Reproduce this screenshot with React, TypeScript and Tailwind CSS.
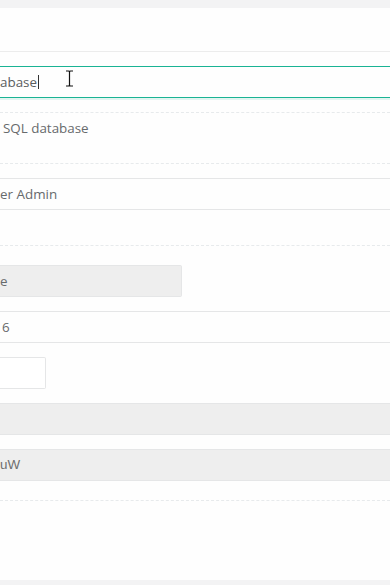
export default function App() {
  return (
    <div className="min-h-[585px] bg-[#f3f3f4] pt-2 pb-[5px] font-['Open_Sans',sans-serif] text-[13.4px] text-[#676a6c]">
      <div className="relative h-[572px] overflow-hidden bg-[#fefefe]">
        {/* title bar */}
        <div className="h-[44px] border-b border-[#ececec]" />

        {/* form body */}
        <div className="pt-[14px]">
          {/* focused field */}
          <div className="flex h-[32px] items-center border-y border-t-[#1ab394] border-b-[#1ab394] shadow-[0_2px_0_rgba(26,179,148,0.12)]">
            <span className="leading-5 text-[#5a5d5f]">abase</span>
            <span className="ml-px h-[14px] w-px bg-[#333]" />
          </div>

          <div className="mt-[14px] border-t border-dashed border-[#e7eaec]" />

          <div className="h-[50px] pt-[5px] pl-[3px] leading-5">SQL database</div>

          <div className="border-t border-dashed border-[#e7eaec]" />

          <div className="mt-[14px] flex h-[32px] items-center border-y border-[#e5e6e7]">
            <span className="leading-5">er Admin</span>
          </div>

          <div className="mt-[35px] border-t border-dashed border-[#e7eaec]" />

          <div className="mt-[19px] flex flex-col gap-[14px]">
            <div className="flex h-[32px] w-[182px] items-center rounded-r-[2px] border border-l-0 border-[#e5e6e7] bg-[#eeeeee]">
              <span className="leading-5">e</span>
            </div>
            <div className="flex h-[32px] items-center border-y border-[#e5e6e7]">
              <span className="pl-[2px] leading-5">6</span>
            </div>
            <div className="h-[32px] w-[46px] rounded-r-[2px] border border-l-0 border-[#e5e6e7] bg-white" />
            <div className="h-[32px] border-y border-[#e5e6e7] bg-[#eeeeee]" />
            <div className="flex h-[32px] items-center border-y border-[#e5e6e7] bg-[#eeeeee]">
              <span className="font-['Liberation_Sans',sans-serif] leading-5 text-[#6f6f6f]">uW</span>
            </div>
          </div>

          <div className="mt-[19px] border-t border-dashed border-[#e7eaec]" />
        </div>

        {/* mouse I-beam over the focused field */}
        <svg
          className="absolute left-[65px] top-[62px]"
          width="9"
          height="17"
          viewBox="0 0 9 17"
          fill="none"
        >
          <path
            d="M1 1h2.5a1 1 0 0 1 1 1v13a1 1 0 0 1-1 1H1M8 1H5.5a1 1 0 0 0-1 1v13a1 1 0 0 0 1 1H8"
            stroke="#111"
            strokeWidth="1.2"
          />
        </svg>
      </div>
    </div>
  );
}
